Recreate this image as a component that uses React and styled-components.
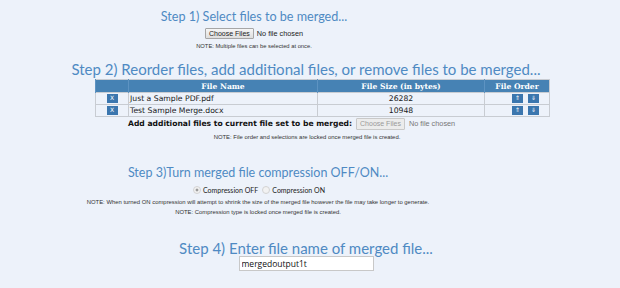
import React from "react";
import styled, { createGlobalStyle } from "styled-components";

const pageBg = "#edf2fa";
const titleBlue = "#4f8ac3";
const headerBlue = "#4682b4";
const buttonBlue = "#3b76ae";
const gridLine = "#c8ccd2";
const ink = "#222";

const GlobalStyle = createGlobalStyle`
  html, body {
    margin: 0;
    padding: 0;
    background: ${pageBg};
  }
  body {
    font-family: "DejaVu Sans", Verdana, sans-serif;
    color: ${ink};
  }
`;

const Page = styled.div`
  width: 620px;
  height: 288px;
  overflow: hidden;
  background: ${pageBg};
`;

const Section = styled.section`
  width: ${p => p.$width}px;
  text-align: center;
  margin-top: ${p => p.$top || 0}px;
`;

const StepTitle = styled.h2`
  margin: 0;
  font-family: Lato, "Open Sans", sans-serif;
  font-weight: 400;
  font-size: ${p => p.$size}px;
  line-height: ${p => p.$lh || 20}px;
  color: ${titleBlue};
`;

const PickerRow = styled.div`
  display: flex;
  justify-content: center;
  align-items: center;
  gap: 3px;
  height: 13px;
  margin-top: ${p => p.$top || 0}px;
`;

const ChooseButton = styled.button`
  font-family: "Liberation Sans", Arial, sans-serif;
  font-size: 7px;
  height: ${p => (p.disabled ? 12 : 11)}px;
  padding: 0 3px;
  line-height: 9px;
  border: 1px solid ${p => (p.disabled ? "#c9c9c9" : "#a6a6a6")};
  border-radius: 1px;
  background: ${p => (p.disabled ? "#ececec" : "linear-gradient(#f6f6f6, #dedede)")};
  color: ${p => (p.disabled ? "#9a9a9a" : "#222")};
`;

const NoFile = styled.span`
  font-family: "Liberation Sans", Arial, sans-serif;
  font-size: 7.3px;
  color: ${p => (p.$muted ? "#777" : "#222")};
`;

const Note = styled.p`
  margin: ${p => p.$top || 0}px 0 0;
  font-family: "Liberation Sans", Arial, sans-serif;
  font-size: ${p => p.$size || 5.8}px;
  line-height: 10px;
  color: #333;
`;

const FileTable = styled.table`
  width: 455px;
  margin: 0 0 0 95px;
  border-collapse: collapse;
  border: 1px solid ${gridLine};
`;

const HeadCell = styled.th`
  background: ${headerBlue};
  color: #fff;
  font-family: "DejaVu Serif", serif;
  font-weight: 700;
  font-size: 7.6px;
  height: 12px;
  padding: 0;
  border-left: 1px solid #5d93c2;
  width: ${p => (p.$w ? `${p.$w}px` : "auto")};
`;

const Cell = styled.td`
  height: 11px;
  padding: 0 ${p => (p.$align === "left" ? "1px" : "0")};
  padding-left: ${p => (p.$indent ? `${p.$indent}px` : undefined)};
  text-align: ${p => p.$align || "center"};
  border: 1px solid ${gridLine};
  font-family: "DejaVu Sans", Verdana, sans-serif;
  font-size: 7.7px;
  line-height: 10px;
  color: #1a1a1a;
`;

const SquareButton = styled.span`
  display: inline-flex;
  align-items: center;
  justify-content: center;
  width: 11px;
  height: 9px;
  margin: 0 ${p => (p.$order ? 2.5 : 0)}px;
  background: ${buttonBlue};
  color: #fff;
  font-family: "DejaVu Sans", sans-serif;
  font-size: 6px;
  vertical-align: middle;
`;

const AddRow = styled.div`
  display: flex;
  align-items: center;
  gap: 4px;
  margin: 0 0 0 128px;
  height: 13px;
`;

const AddLabel = styled.span`
  font-family: "DejaVu Sans", Verdana, sans-serif;
  font-weight: 700;
  font-size: 7.6px;
  color: #111;
`;

const RadioRow = styled.div`
  display: flex;
  justify-content: center;
  align-items: center;
  gap: 2px;
  height: 12px;
  margin-top: 1px;
  font-family: Lato, "Open Sans", sans-serif;
  font-size: 7px;
  color: #222;
`;

const RadioDot = styled.span`
  display: inline-block;
  width: 6px;
  height: 6px;
  border-radius: 50%;
  border: 1px solid #d3d3d3;
  background: ${p => (p.$on ? "radial-gradient(#9a9a9a 30%, #f2f2f2 40%)" : "#f2f2f2")};
  margin-left: 2px;
`;

const NameInput = styled.input`
  display: block;
  margin: 0 auto;
  width: 135px;
  height: 15px;
  box-sizing: border-box;
  border: 1px solid #c8c8c8;
  background: #fff;
  padding: 0 2px;
  font-family: "Open Sans", "Noto Sans", sans-serif;
  font-size: 8.5px;
  color: #111;
  outline: none;
`;

const files = [
  { name: "Just a Sample PDF.pdf", size: 26282 },
  { name: "Test Sample Merge.docx", size: 10948 },
];

export default function App() {
  return (
    <Page>
      <GlobalStyle />
      <Section $width={508} $top={7}>
        <StepTitle $size={12.6}>Step 1) Select files to be merged...</StepTitle>
        <PickerRow>
          <ChooseButton type="button">Choose Files</ChooseButton>
          <NoFile>No file chosen</NoFile>
        </PickerRow>
        <Note $top={1}>NOTE: Multiple files can be selected at once.</Note>
      </Section>

      <Section $width={612} $top={8}>
        <StepTitle $size={15}>
          Step 2) Reorder files, add additional files, or remove files to be merged...
        </StepTitle>
      </Section>
      <FileTable>
        <thead>
          <tr>
            <HeadCell $w={32} />
            <HeadCell $w={188}>File Name</HeadCell>
            <HeadCell $w={166}>File Size (in bytes)</HeadCell>
            <HeadCell>File Order</HeadCell>
          </tr>
        </thead>
        <tbody>
          {files.map(f => (
            <tr key={f.name}>
              <Cell>
                <SquareButton>X</SquareButton>
              </Cell>
              <Cell $align="left">{f.name}</Cell>
              <Cell>{f.size}</Cell>
              <Cell $indent={17}>
                <SquareButton $order>⇑</SquareButton>
                <SquareButton $order>⇓</SquareButton>
              </Cell>
            </tr>
          ))}
        </tbody>
      </FileTable>
      <AddRow>
        <AddLabel>Add additional files to current file set to be merged:</AddLabel>
        <ChooseButton type="button" disabled>
          Choose Files
        </ChooseButton>
        <NoFile $muted>No file chosen</NoFile>
      </AddRow>
      <Section $width={614}>
        <Note $top={2} $size={5.9}>
          NOTE: File order and selections are locked once merged file is created.
        </Note>
      </Section>

      <Section $width={516} $top={21}>
        <StepTitle $size={12.5}>Step 3)Turn merged file compression OFF/ON...</StepTitle>
        <RadioRow>
          <RadioDot $on />
          <span>Compression OFF</span>
          <RadioDot />
          <span>Compression ON</span>
        </RadioRow>
        <Note $top={1} $size={5.9}>
          NOTE: When turned ON compression will attempt to shrink the size of the merged file however the file may take longer to generate.
        </Note>
        <Note $size={5.9}>NOTE: Compression type is locked once merged file is created.</Note>
      </Section>

      <Section $width={612} $top={23}>
        <StepTitle $size={15} $lh={16}>Step 4) Enter file name of merged file...</StepTitle>
        <NameInput defaultValue="mergedoutput1t" />
      </Section>
    </Page>
  );
}
